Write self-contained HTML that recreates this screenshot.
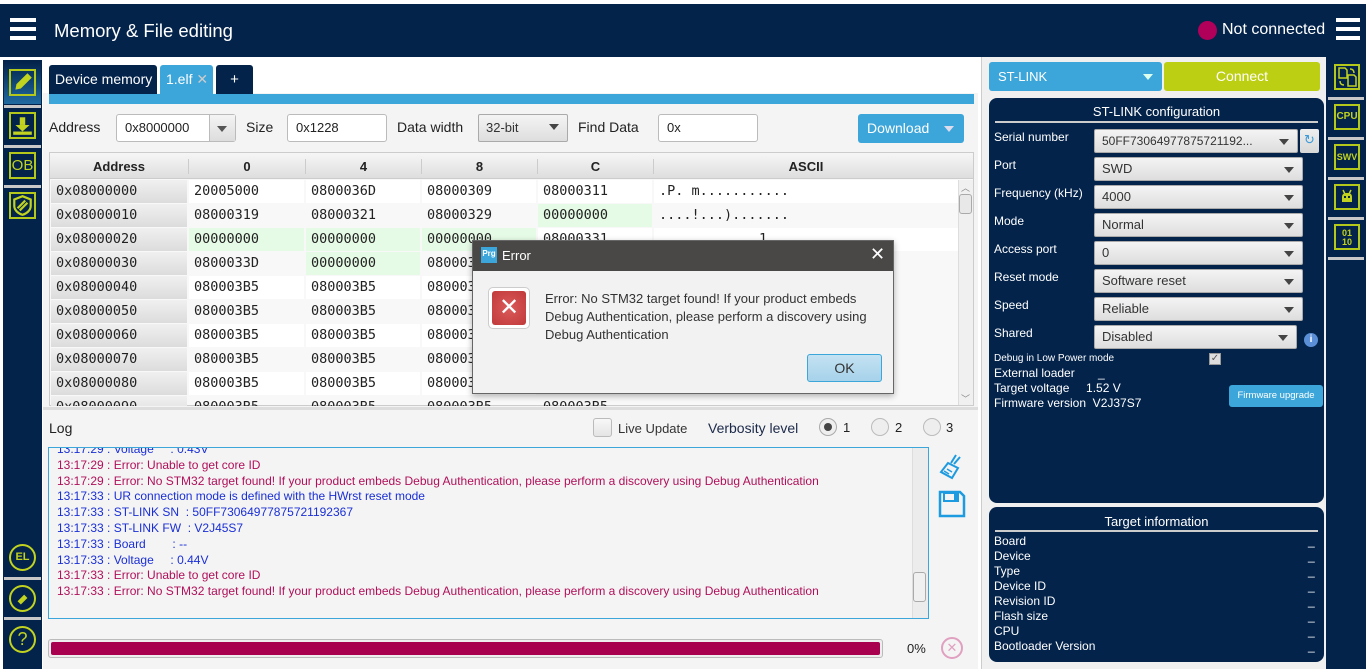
<!DOCTYPE html>
<html><head><meta charset="utf-8"><style>
*{box-sizing:border-box;margin:0;padding:0}
body{width:1366px;height:669px;overflow:hidden;background:#fff;font-family:"Liberation Sans","DejaVu Sans",sans-serif;position:relative;font-size:13px;color:#222}
.a{position:absolute}
.nav{background:#03234b}
.sep{position:absolute;height:3px;background:#c8c8c8}
.ic{position:absolute;border:2px solid #b4c81c;color:#c1d21f;font-weight:bold;text-align:center}
.tbl div{position:absolute;height:23px;line-height:22px;font-family:"DejaVu Sans Mono","Liberation Mono",monospace;font-size:13.5px;padding-left:5px;color:#222}
.addr{background:linear-gradient(#f0f0f0,#dcdcdc);}
.g{background:#e6fbe6}
.w{background:#fff}
.sel{position:absolute;height:24px;border:1px solid #aaa;border-radius:2px;background:linear-gradient(#f4f4f4,#dedede);font-size:13px;line-height:22px;padding-left:7px;color:#333}
.sel:after{content:"";position:absolute;right:8px;top:9px;border:5px solid transparent;border-top:6px solid #444}
.cfg{position:absolute;left:994px;color:#fff;font-size:12px}
.log div{height:15.8px;font-size:12px;letter-spacing:0;white-space:nowrap}
.r{color:#b0105a}.b{color:#1a2fd6}
.ti{color:#fff;font-size:12px;height:15px;position:absolute;left:994px}
</style></head><body>
<div class="a nav" style="left:0;top:4px;width:1366px;height:53px"></div>
<div class="a" style="left:10px;top:18px;width:26px;height:4px;background:#fff"></div>
<div class="a" style="left:10px;top:27px;width:26px;height:4px;background:#fff"></div>
<div class="a" style="left:10px;top:36px;width:26px;height:4px;background:#fff"></div>
<div class="a" style="left:54px;top:20px;color:#fff;font-size:18.5px">Memory &amp; File editing</div>
<div class="a" style="left:1198px;top:21px;width:19px;height:19px;border-radius:50%;background:#b0005a"></div>
<div class="a" style="left:1222px;top:21px;color:#fff;font-size:16px">Not connected</div>
<div class="a" style="left:1336px;top:18px;width:24px;height:4px;background:#fff"></div>
<div class="a" style="left:1336px;top:27px;width:24px;height:4px;background:#fff"></div>
<div class="a" style="left:1336px;top:36px;width:24px;height:4px;background:#fff"></div>

<div class="a nav" style="left:3px;top:60px;width:39px;height:609px"></div>
<div class="a" style="left:4px;top:62px;width:37px;height:42px;background:linear-gradient(#03234b,#1f6aa0)"></div>
<div class="ic" style="left:9px;top:69px;width:27px;height:27px"><svg width="23" height="23" viewBox="0 0 21 21"><path d="M4 17 L5 12 L15 2 L19 6 L9 16 Z" fill="#c1d21f"/></svg></div>
<div class="sep" style="left:4px;top:105px;width:37px"></div>
<div class="ic" style="left:9px;top:112px;width:27px;height:27px"><svg width="23" height="23" viewBox="0 0 21 21"><rect x="8" y="3" width="5" height="7" fill="#c1d21f"/><path d="M4 10 H17 L10.5 16 Z" fill="#c1d21f"/><rect x="2" y="16" width="17" height="3" fill="#c1d21f"/></svg></div>
<div class="sep" style="left:4px;top:145px;width:37px"></div>
<div class="ic" style="left:9px;top:152px;width:27px;height:27px;font-size:15px;line-height:23px;font-weight:normal">OB</div>
<div class="sep" style="left:4px;top:185px;width:37px"></div>
<div class="ic" style="left:9px;top:192px;width:27px;height:27px"><svg width="23" height="23" viewBox="0 0 21 21"><path d="M10.5 2 L18 5 V11 C18 15 14 18 10.5 19 C7 18 3 15 3 11 V5 Z" fill="none" stroke="#c1d21f" stroke-width="2"/><path d="M6 13 L13 6 M8 15 L15 8" stroke="#c1d21f" stroke-width="2"/></svg></div>
<div class="a" style="left:9px;top:544px;width:27px;height:27px;border:2px solid #c1d21f;border-radius:50%;color:#c1d21f;font-size:11px;font-weight:bold;text-align:center;line-height:23px">EL</div>
<div class="sep" style="left:4px;top:577px;width:37px"></div>
<div class="a" style="left:9px;top:585px;width:27px;height:27px;border:2px solid #c1d21f;border-radius:50%"><svg width="23" height="23" viewBox="0 0 21 21"><path d="M6 13 L12 7 L15 10 L9 16 Z" fill="#c1d21f"/></svg></div>
<div class="sep" style="left:4px;top:617px;width:37px"></div>
<div class="a" style="left:9px;top:626px;width:27px;height:27px;border:2px solid #c1d21f;border-radius:50%;color:#c1d21f;font-size:18px;text-align:center;line-height:23px">?</div>

<div class="a" style="left:43px;top:57px;width:935px;height:612px;background:#f4f4f4"></div>
<div class="a" style="left:43px;top:57px;width:935px;height:36px;background:#fff"></div>
<div class="a nav" style="left:49px;top:65px;width:108px;height:29px;border-radius:3px 3px 0 0;color:#fff;font-size:14px;line-height:29px;padding-left:6px">Device memory</div>
<div class="a" style="left:160px;top:65px;width:53px;height:29px;border-radius:3px 3px 0 0;background:#3ca6da;color:#fff;font-size:14px;line-height:29px;padding-left:6px">1.elf <span style="color:#ccc">✕</span></div>
<div class="a nav" style="left:216px;top:65px;width:37px;height:29px;border-radius:3px 3px 0 0;color:#fff;font-size:15px;line-height:29px;text-align:center">+</div>
<div class="a" style="left:49px;top:94px;width:925px;height:10px;background:#3ca6da"></div>

<div class="a" style="left:49px;top:119px;font-size:14px">Address</div>
<div class="a" style="left:116px;top:114px;width:120px;height:28px;background:#fff;border:1px solid #bbb;border-radius:3px;font-size:13px;line-height:26px;padding-left:8px">0x8000000</div>
<div class="a" style="left:209px;top:115px;width:26px;height:26px;background:linear-gradient(#f4f4f4,#ddd);border-left:1px solid #bbb"></div>
<div class="a" style="left:217px;top:126px;border:5px solid transparent;border-top:6px solid #555"></div>
<div class="a" style="left:246px;top:119px;font-size:14px">Size</div>
<div class="a" style="left:287px;top:114px;width:100px;height:28px;background:#fff;border:1px solid #bbb;border-radius:3px;line-height:26px;padding-left:8px">0x1228</div>
<div class="a" style="left:397px;top:119px;font-size:14px">Data width</div>
<div class="sel" style="left:478px;top:114px;width:90px;height:28px;line-height:26px">32-bit</div>
<div class="a" style="left:578px;top:119px;font-size:14px">Find Data</div>
<div class="a" style="left:658px;top:114px;width:100px;height:28px;background:#fff;border:1px solid #bbb;border-radius:3px;line-height:26px;padding-left:8px">0x</div>
<div class="a" style="left:858px;top:114px;width:106px;height:29px;background:#3ca6da;border-radius:3px;color:#fff;font-size:14px;line-height:29px;padding-left:9px">Download</div>
<div class="a" style="left:944px;top:126px;border:5px solid transparent;border-top:6px solid #dde"></div>

<div class="a" style="left:49px;top:152px;width:925px;height:254px;background:#f8f8f8;border:1px solid #ccc"></div>
<div class="a" style="left:50px;top:153px;width:923px;height:26px;background:linear-gradient(#f6f6f6,#dedede);border-bottom:1px solid #ccc"></div>
<div class="a" style="left:50px;top:159px;width:138px;text-align:center;font-weight:bold;font-size:13px">Address</div>
<div class="a" style="left:188px;top:159px;width:117px;text-align:center;font-weight:bold;border-left:1px solid #ccc">0</div>
<div class="a" style="left:305px;top:159px;width:116px;text-align:center;font-weight:bold;border-left:1px solid #ccc">4</div>
<div class="a" style="left:421px;top:159px;width:116px;text-align:center;font-weight:bold;border-left:1px solid #ccc">8</div>
<div class="a" style="left:537px;top:159px;width:116px;text-align:center;font-weight:bold;border-left:1px solid #ccc">C</div>
<div class="a" style="left:653px;top:159px;width:305px;text-align:center;font-weight:bold;border-left:1px solid #ccc">ASCII</div>
<div class="a" style="left:958px;top:180px;width:15px;height:225px;background:#f0f0f0;border-left:1px solid #ddd"></div>
<div class="a" style="left:959px;top:194px;width:13px;height:20px;background:#e8e8e8;border:1px solid #aaa;border-radius:3px"></div>
<div class="a" style="left:961px;top:181px;font-size:9px;color:#888">︿</div>
<div class="a" style="left:961px;top:392px;font-size:9px;color:#888">﹀</div>
<div class="tbl a" style="left:0;top:0;width:958px;height:406px;overflow:hidden">
<div class="addr" style="left:51px;top:180px;width:136px">0x08000000</div><div class="w" style="left:189px;top:180px;width:115px">20005000</div><div class="w" style="left:306px;top:180px;width:114px">0800036D</div><div class="w" style="left:422px;top:180px;width:114px">08000309</div><div class="w" style="left:538px;top:180px;width:114px">08000311</div><div class="w" style="left:654px;top:180px;width:304px">.P. m...........</div>
<div class="addr" style="left:51px;top:204px;width:136px">0x08000010</div><div style="left:189px;top:204px;width:115px">08000319</div><div style="left:306px;top:204px;width:114px">08000321</div><div style="left:422px;top:204px;width:114px">08000329</div><div class="g" style="left:538px;top:204px;width:114px">00000000</div><div style="left:654px;top:204px;width:304px">....!...).......</div>
<div class="addr" style="left:51px;top:228px;width:136px">0x08000020</div><div class="g" style="left:189px;top:228px;width:115px">00000000</div><div class="g" style="left:306px;top:228px;width:114px">00000000</div><div class="g" style="left:422px;top:228px;width:114px">00000000</div><div class="w" style="left:538px;top:228px;width:114px">08000331</div><div class="w" style="left:654px;top:228px;width:304px;padding-left:105px">1</div>
<div class="addr" style="left:51px;top:252px;width:136px">0x08000030</div><div style="left:189px;top:252px;width:115px">0800033D</div><div class="g" style="left:306px;top:252px;width:114px">00000000</div><div style="left:422px;top:252px;width:114px">08000341</div>
<div class="addr" style="left:51px;top:276px;width:136px">0x08000040</div><div class="w" style="left:189px;top:276px;width:115px">080003B5</div><div class="w" style="left:306px;top:276px;width:114px">080003B5</div><div class="w" style="left:422px;top:276px;width:114px">080003B5</div>
<div class="addr" style="left:51px;top:300px;width:136px">0x08000050</div><div style="left:189px;top:300px;width:115px">080003B5</div><div style="left:306px;top:300px;width:114px">080003B5</div><div style="left:422px;top:300px;width:114px">080003B5</div>
<div class="addr" style="left:51px;top:324px;width:136px">0x08000060</div><div class="w" style="left:189px;top:324px;width:115px">080003B5</div><div class="w" style="left:306px;top:324px;width:114px">080003B5</div><div class="w" style="left:422px;top:324px;width:114px">080003B5</div>
<div class="addr" style="left:51px;top:348px;width:136px">0x08000070</div><div style="left:189px;top:348px;width:115px">080003B5</div><div style="left:306px;top:348px;width:114px">080003B5</div><div style="left:422px;top:348px;width:114px">080003B5</div>
<div class="addr" style="left:51px;top:372px;width:136px">0x08000080</div><div class="w" style="left:189px;top:372px;width:115px">080003B5</div><div class="w" style="left:306px;top:372px;width:114px">080003B5</div><div class="w" style="left:422px;top:372px;width:114px">080003B5</div>
<div class="addr" style="left:51px;top:396px;width:136px">0x08000090</div><div style="left:189px;top:396px;width:115px">080003B5</div><div style="left:306px;top:396px;width:114px">080003B5</div><div style="left:422px;top:396px;width:114px">080003B5</div><div style="left:538px;top:396px;width:114px">080003B5</div>
</div>
<div class="a" style="left:43px;top:407px;width:935px;height:3px;background:#ddd"></div>

<div class="a" style="left:49px;top:420px;font-size:14px">Log</div>
<div class="a" style="left:593px;top:418px;width:19px;height:19px;border:1px solid #bbb;border-radius:3px;background:linear-gradient(#f8f8f8,#e4e4e4)"></div>
<div class="a" style="left:618px;top:421px;font-size:13px;color:#333">Live Update</div>
<div class="a" style="left:708px;top:420px;font-size:14px;color:#1c2a4a">Verbosity level</div>
<div class="a" style="left:819px;top:418px;width:18px;height:18px;border:1px solid #aaa;border-radius:50%;background:#eee"></div>
<div class="a" style="left:824px;top:423px;width:8px;height:8px;border-radius:50%;background:#444"></div>
<div class="a" style="left:843px;top:420px">1</div>
<div class="a" style="left:871px;top:418px;width:18px;height:18px;border:1px solid #bbb;border-radius:50%;background:#eee"></div>
<div class="a" style="left:895px;top:420px">2</div>
<div class="a" style="left:923px;top:418px;width:18px;height:18px;border:1px solid #bbb;border-radius:50%;background:#eee"></div>
<div class="a" style="left:946px;top:420px">3</div>
<div class="a" style="left:48px;top:447px;width:881px;height:172px;border:1px solid #3ca6da;background:#f4f4f4;overflow:hidden"></div>
<div class="a" style="left:912px;top:448px;width:16px;height:170px;background:#ececec;border-left:1px solid #ddd"></div>
<div class="a" style="left:913px;top:572px;width:13px;height:30px;background:#f0f0f0;border:1px solid #aaa;border-radius:3px"></div>
<div class="a log" style="left:57px;top:442px;width:850px;height:176px;overflow:hidden;clip-path:inset(6px 0 0 0)">
<div class="b">13:17:29 : Voltage&nbsp;&nbsp;&nbsp;&nbsp;&nbsp;: 0.43V</div>
<div class="r">13:17:29 : Error: Unable to get core ID</div>
<div class="r">13:17:29 : Error: No STM32 target found! If your product embeds Debug Authentication, please perform a discovery using Debug Authentication</div>
<div class="b">13:17:33 : UR connection mode is defined with the HWrst reset mode</div>
<div class="b">13:17:33 : ST-LINK SN&nbsp; : 50FF73064977875721192367</div>
<div class="b">13:17:33 : ST-LINK FW&nbsp; : V2J45S7</div>
<div class="b">13:17:33 : Board&nbsp;&nbsp;&nbsp;&nbsp;&nbsp;&nbsp;&nbsp; : --</div>
<div class="b">13:17:33 : Voltage&nbsp;&nbsp;&nbsp;&nbsp;&nbsp;: 0.44V</div>
<div class="r">13:17:33 : Error: Unable to get core ID</div>
<div class="r">13:17:33 : Error: No STM32 target found! If your product embeds Debug Authentication, please perform a discovery using Debug Authentication</div>
</div>
<svg class="a" style="left:938px;top:452px" width="28" height="28" viewBox="0 0 28 28"><path d="M18 3 L13 11 M22 5 L16 12" stroke="#1d9be0" stroke-width="2" fill="none"/><path d="M10 11 L20 16 L14 26 L3 20 Z" fill="none" stroke="#1d9be0" stroke-width="2"/><path d="M6 19 L11 22 M9 17 L14 20" stroke="#1d9be0" stroke-width="1.5"/></svg>
<svg class="a" style="left:938px;top:490px" width="28" height="28" viewBox="0 0 28 28"><path d="M2 2 H22 L26 6 V26 H2 Z" fill="none" stroke="#1d9be0" stroke-width="2.5"/><rect x="6" y="3" width="14" height="8" fill="none" stroke="#1d9be0" stroke-width="2"/><rect x="16" y="4" width="3" height="6" fill="#1d9be0"/></svg>
<div class="a" style="left:48px;top:639px;width:835px;height:19px;border:1px solid #bbb;border-radius:3px;background:#eee"></div>
<div class="a" style="left:51px;top:642px;width:829px;height:13px;background:#a8004f;border-radius:2px"></div>
<div class="a" style="left:907px;top:641px;font-size:13px">0%</div>
<div class="a" style="left:941px;top:637px;width:22px;height:22px;border:2px solid #e0a0c0;border-radius:50%;color:#e0a0c0;text-align:center;line-height:18px;font-size:13px;font-weight:bold">✕</div>

<div class="a" style="left:472px;top:240px;width:422px;height:154px;background:#f2f2f2;border:1px solid #666;box-shadow:0 2px 6px rgba(0,0,0,.3)"></div>
<div class="a" style="left:473px;top:241px;width:420px;height:30px;background:#4a4846"></div>
<div class="a" style="left:481px;top:247px;width:16px;height:16px;background:#3ca6da;color:#fff;font-size:8px;font-weight:bold;line-height:14px;text-align:center">Prg</div>
<div class="a" style="left:502px;top:248px;color:#fff;font-size:13px">Error</div>
<div class="a" style="left:870px;top:244px;color:#fff;font-size:18px">✕</div>
<div class="a" style="left:488px;top:287px;width:42px;height:42px;border:1px solid #ccc;border-radius:5px;background:#fff"></div>
<div class="a" style="left:492px;top:291px;width:34px;height:34px;border-radius:3px;background:radial-gradient(#dc5a5a,#c03a3a);color:#fff;font-size:24px;line-height:34px;text-align:center">✕</div>
<div class="a" style="left:545px;top:290px;font-size:13px;line-height:18px;color:#333;width:345px">Error: No STM32 target found! If your product embeds Debug Authentication, please perform a discovery using Debug Authentication</div>
<div class="a" style="left:807px;top:354px;width:75px;height:28px;border:1px solid #3ca6da;border-radius:3px;background:linear-gradient(#c4e2f2,#a6d2ea);text-align:center;line-height:26px;font-size:14px;color:#333">OK</div>

<div class="a" style="left:981px;top:57px;width:345px;height:612px;background:#f0f0f0;border-left:1px solid #ccc"></div>
<div class="a" style="left:989px;top:62px;width:173px;height:29px;background:#3ca6da;border-radius:3px;color:#fff;font-size:13px;line-height:29px;padding-left:9px">ST-LINK</div>
<div class="a" style="left:1143px;top:74px;border:5px solid transparent;border-top:6px solid #dfe"></div>
<div class="a" style="left:1164px;top:62px;width:156px;height:29px;background:#bccf12;border-radius:3px;color:#fff;font-size:14px;line-height:29px;text-align:center">Connect</div>
<div class="a nav" style="left:989px;top:98px;width:335px;height:405px;border-radius:8px"></div>
<div class="a" style="left:989px;top:104px;width:335px;text-align:center;color:#fff;font-size:13px">ST-LINK configuration</div>
<div class="a" style="left:995px;top:121px;width:323px;height:2px;background:#ccc"></div>
<div class="cfg" style="top:130px">Serial number</div><div class="sel" style="left:1094px;top:129px;width:204px;font-size:12px">50FF73064977875721192...</div>
<div class="a" style="left:1300px;top:129px;width:19px;height:24px;border-radius:2px;background:linear-gradient(#eee,#d8d8d8);color:#3a9ad8;font-size:13px;text-align:center;line-height:22px">↻</div>
<div class="cfg" style="top:158px">Port</div><div class="sel" style="left:1094px;top:157px;width:209px">SWD</div>
<div class="cfg" style="top:186px">Frequency (kHz)</div><div class="sel" style="left:1094px;top:185px;width:209px">4000</div>
<div class="cfg" style="top:214px">Mode</div><div class="sel" style="left:1094px;top:213px;width:209px">Normal</div>
<div class="cfg" style="top:242px">Access port</div><div class="sel" style="left:1094px;top:241px;width:209px">0</div>
<div class="cfg" style="top:270px">Reset mode</div><div class="sel" style="left:1094px;top:269px;width:209px">Software reset</div>
<div class="cfg" style="top:298px">Speed</div><div class="sel" style="left:1094px;top:297px;width:209px">Reliable</div>
<div class="cfg" style="top:326px">Shared</div><div class="sel" style="left:1094px;top:325px;width:203px">Disabled</div>
<div class="a" style="left:1304px;top:333px;width:14px;height:14px;border-radius:50%;background:#5a8ed6;color:#fff;font-size:10px;font-weight:bold;text-align:center;line-height:14px">i</div>
<div class="cfg" style="top:353px;font-size:10px">Debug in Low Power mode</div>
<div class="a" style="left:1209px;top:353px;width:12px;height:12px;background:#ddd;border:1px solid #999;font-size:10px;line-height:10px;color:#555;text-align:center">✓</div>
<div class="cfg" style="top:366px">External loader&nbsp;&nbsp;&nbsp;&nbsp;&nbsp;&nbsp;&nbsp;_</div>
<div class="cfg" style="top:381px">Target voltage&nbsp;&nbsp;&nbsp;&nbsp;&nbsp;1.52 V</div>
<div class="cfg" style="top:396px">Firmware version&nbsp;&nbsp;V2J37S7</div>
<div class="a" style="left:1229px;top:385px;width:94px;height:22px;background:#3ca6da;border-radius:3px;color:#fff;font-size:9.5px;line-height:22px;text-align:center">Firmware upgrade</div>
<div class="a nav" style="left:989px;top:507px;width:335px;height:155px;border-radius:8px"></div>
<div class="a" style="left:989px;top:514px;width:335px;text-align:center;color:#fff;font-size:13px">Target information</div>
<div class="a" style="left:995px;top:530px;width:323px;height:2px;background:#ccc"></div>
<div class="ti" style="top:534px">Board</div><div class="ti" style="top:549px">Device</div><div class="ti" style="top:564px">Type</div><div class="ti" style="top:579px">Device ID</div><div class="ti" style="top:594px">Revision ID</div><div class="ti" style="top:609px">Flash size</div><div class="ti" style="top:624px">CPU</div><div class="ti" style="top:639px">Bootloader Version</div>
<div class="a" style="left:1308px;top:534px;color:#fff;font-size:12px;line-height:15px">_<br>_<br>_<br>_<br>_<br>_<br>_<br>_</div>

<div class="a nav" style="left:1326px;top:57px;width:40px;height:612px"></div>
<div class="ic" style="left:1334px;top:64px;width:26px;height:26px"><svg width="22" height="22" viewBox="0 0 22 22"><path d="M3 2 H9 L11 4 V12 H3 Z M12 9 H18 L20 11 V20 H12 Z" fill="none" stroke="#c1d21f" stroke-width="1.5"/><path d="M14 3 C17 3 18 5 18 7 M8 19 C5 19 4 17 4 15" fill="none" stroke="#c1d21f" stroke-width="1.5"/></svg></div>
<div class="sep" style="left:1328px;top:97px;width:36px"></div>
<div class="ic" style="left:1334px;top:104px;width:26px;height:26px;font-size:10px;line-height:22px">CPU</div>
<div class="sep" style="left:1328px;top:137px;width:36px"></div>
<div class="ic" style="left:1334px;top:144px;width:26px;height:26px;font-size:9px;line-height:22px">SWV</div>
<div class="sep" style="left:1328px;top:177px;width:36px"></div>
<div class="ic" style="left:1334px;top:184px;width:26px;height:26px"><svg width="22" height="22" viewBox="0 0 22 22"><path d="M6 16 V11 C6 8 8 7 11 7 C14 7 16 8 16 11 V16 Z" fill="#c1d21f"/><path d="M7 4 L9 8 M15 4 L13 8" stroke="#c1d21f" stroke-width="1.5"/><rect x="8" y="10" width="2" height="2" fill="#03234b"/><rect x="12" y="10" width="2" height="2" fill="#03234b"/></svg></div>
<div class="sep" style="left:1328px;top:217px;width:36px"></div>
<div class="ic" style="left:1334px;top:224px;width:26px;height:26px;font-size:9px;line-height:9px;padding-top:3px">01<br>10</div>
<div class="sep" style="left:1328px;top:257px;width:36px"></div>
</body></html>
